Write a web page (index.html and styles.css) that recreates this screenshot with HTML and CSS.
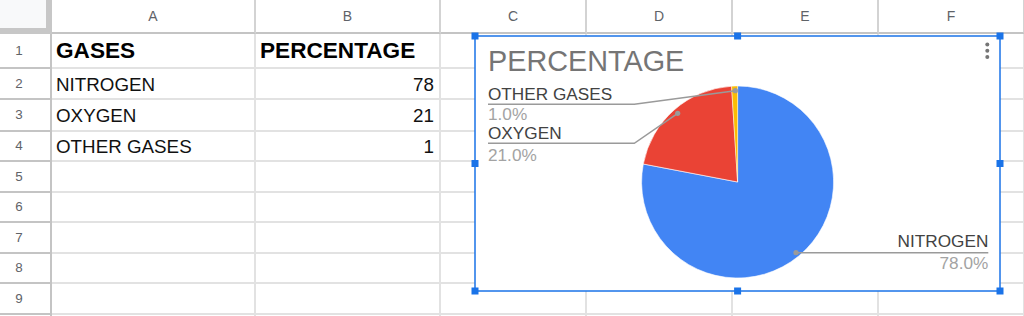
FILE: index.html
```html
<!DOCTYPE html>
<html lang="en">
<head>
<meta charset="utf-8">
<title>Sheet - Gases</title>
<link rel="stylesheet" href="styles.css">
</head>
<body>
<div class="page">
  <div class="sheet">
    <div class="corner"></div>
    <div class="colhead">A</div>
    <div class="colhead">B</div>
    <div class="colhead">C</div>
    <div class="colhead">D</div>
    <div class="colhead">E</div>
    <div class="colhead">F</div>

    <div class="rowhead">1</div>
    <div class="cell bold">GASES</div>
    <div class="cell bold">PERCENTAGE</div>
    <div class="cell"></div><div class="cell"></div><div class="cell"></div><div class="cell"></div>

    <div class="rowhead">2</div>
    <div class="cell">NITROGEN</div>
    <div class="cell num">78</div>
    <div class="cell"></div><div class="cell"></div><div class="cell"></div><div class="cell"></div>

    <div class="rowhead">3</div>
    <div class="cell">OXYGEN</div>
    <div class="cell num">21</div>
    <div class="cell"></div><div class="cell"></div><div class="cell"></div><div class="cell"></div>

    <div class="rowhead">4</div>
    <div class="cell">OTHER GASES</div>
    <div class="cell num">1</div>
    <div class="cell"></div><div class="cell"></div><div class="cell"></div><div class="cell"></div>

    <div class="rowhead">5</div>
    <div class="cell"></div><div class="cell"></div><div class="cell"></div><div class="cell"></div><div class="cell"></div><div class="cell"></div>
    <div class="rowhead">6</div>
    <div class="cell"></div><div class="cell"></div><div class="cell"></div><div class="cell"></div><div class="cell"></div><div class="cell"></div>
    <div class="rowhead">7</div>
    <div class="cell"></div><div class="cell"></div><div class="cell"></div><div class="cell"></div><div class="cell"></div><div class="cell"></div>
    <div class="rowhead">8</div>
    <div class="cell"></div><div class="cell"></div><div class="cell"></div><div class="cell"></div><div class="cell"></div><div class="cell"></div>
    <div class="rowhead">9</div>
    <div class="cell"></div><div class="cell"></div><div class="cell"></div><div class="cell"></div><div class="cell"></div><div class="cell"></div>
    <div class="rowhead"></div>
    <div class="cell"></div><div class="cell"></div><div class="cell"></div><div class="cell"></div><div class="cell"></div><div class="cell"></div>
  </div>

  <div class="chart">
    <svg class="chart-svg" width="533" height="263" viewBox="471 32 533 263" xmlns="http://www.w3.org/2000/svg">
      <rect class="frame" x="475" y="36" width="525" height="255"/>

      <text class="title" x="488" y="70.7">PERCENTAGE</text>

      <circle class="menu-dot" cx="987.3" cy="44.5" r="2"/>
      <circle class="menu-dot" cx="987.3" cy="50.8" r="2"/>
      <circle class="menu-dot" cx="987.3" cy="57" r="2"/>

      <path class="slice-blue" d="M737.6,182 L737.6,86 A96,96 0 1 1 643.3,164.0 Z"/>
      <path class="slice-red" d="M737.6,182 L643.3,164.0 A96,96 0 0 1 731.57,86.19 Z"/>
      <path class="slice-yellow" d="M737.6,182 L731.57,86.19 A96,96 0 0 1 737.6,86 Z"/>

      <polyline class="leader" points="488,104.3 634.3,104.3 735.3,90.7"/>
      <polyline class="leader" points="488,143.3 634.3,143.3 677.7,113.3"/>
      <polyline class="leader" points="796,252.7 988.3,252.7"/>
      <circle class="leader-dot" cx="735.3" cy="90.7" r="2.6"/>
      <circle class="leader-dot" cx="677.7" cy="113.3" r="2.6"/>
      <circle class="leader-dot" cx="796" cy="252.7" r="2.6"/>

      <text class="label" x="488" y="100">OTHER GASES</text>
      <text class="pct" x="488" y="120">1.0%</text>
      <text class="label" x="488" y="139.3">OXYGEN</text>
      <text class="pct" x="488" y="161">21.0%</text>
      <text class="label end" x="988.3" y="247.3">NITROGEN</text>
      <text class="pct end" x="988.3" y="269">78.0%</text>

      <rect class="handle" x="471.5" y="32.5" width="7" height="7"/>
      <rect class="handle" x="734.1" y="32.5" width="7" height="7"/>
      <rect class="handle" x="996.5" y="32.5" width="7" height="7"/>
      <rect class="handle" x="471.5" y="160" width="7" height="7"/>
      <rect class="handle" x="996.5" y="160" width="7" height="7"/>
      <rect class="handle" x="471.5" y="287.5" width="7" height="7"/>
      <rect class="handle" x="734.1" y="287.5" width="7" height="7"/>
      <rect class="handle" x="996.5" y="287.5" width="7" height="7"/>
    </svg>
  </div>
</div>
</body>
</html>
```

FILE: styles.css
```css
* {
  box-sizing: border-box;
}

html, body {
  margin: 0;
  padding: 0;
  background: #ffffff;
  overflow: hidden;
}

body {
  width: 1024px;
  height: 316px;
  font-family: "Liberation Sans", Arial, sans-serif;
}

.page {
  position: relative;
  width: 1024px;
  height: 316px;
  overflow: hidden;
}

.sheet {
  display: grid;
  grid-template-columns: 52px 204px 185px 146px 146px 146px 146px;
  grid-template-rows: 34px 34.5px 31.5px 31.5px 30.5px 30.5px 30.5px 30.5px 30.5px 30.5px 30.5px;
  width: 1025px;
}

.corner {
  background: #f8f9fa;
  border-right: 6px solid #c7c7c7;
  border-bottom: 6px solid #c7c7c7;
}

.colhead {
  display: flex;
  align-items: center;
  justify-content: center;
  background: #ffffff;
  border-right: 2px solid #d3d3d3;
  border-bottom: 2px solid #c4c4c4;
  color: #5f6368;
  font-size: 14px;
  padding-bottom: 1px;
}

.rowhead {
  display: flex;
  align-items: center;
  justify-content: center;
  background: #ffffff;
  border-right: 2px solid #c4c4c4;
  border-bottom: 2px solid #c4c4c4;
  color: #5f6368;
  font-size: 13.4px;
  padding-right: 12px;
}

.cell {
  display: flex;
  align-items: flex-end;
  justify-content: flex-start;
  border-right: 2px solid #e2e2e2;
  border-bottom: 2px solid #e2e2e2;
  padding: 0 5px 3.6px 4px;
  font-size: 18.8px;
  line-height: 1;
  color: #111111;
  white-space: nowrap;
  overflow: visible;
}

.cell.bold {
  font-weight: bold;
  font-size: 22.6px;
  color: #000000;
}

.cell.num {
  justify-content: flex-end;
}

.chart {
  position: absolute;
  left: 471px;
  top: 32px;
  width: 533px;
  height: 263px;
}

.chart-svg {
  display: block;
  font-family: "Liberation Sans", Arial, sans-serif;
}

.frame {
  fill: #ffffff;
  stroke: #1a73e8;
  stroke-width: 1.5;
}

.handle {
  fill: #1a73e8;
}

.title {
  fill: #757575;
  font-size: 28.8px;
}

.menu-dot {
  fill: #757575;
}

.slice-blue {
  fill: #4285f4;
  stroke: #ffffff;
  stroke-width: 0.6;
}

.slice-red {
  fill: #ea4335;
  stroke: #ffffff;
  stroke-width: 0.6;
}

.slice-yellow {
  fill: #fbbc04;
  stroke: #ffffff;
  stroke-width: 0.4;
}

.leader {
  fill: none;
  stroke: #9a9a9a;
  stroke-width: 1.5;
}

.leader-dot {
  fill: #9a9a9a;
}

.label {
  fill: #424242;
  font-size: 17.2px;
}

.pct {
  fill: #a3a3a3;
  font-size: 17.2px;
}

.end {
  text-anchor: end;
}
```
